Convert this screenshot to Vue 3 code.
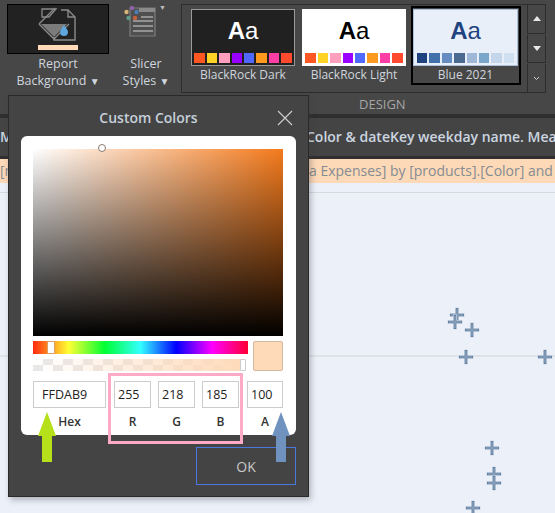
<template>
  <main class="app">
    <header class="ribbon">
      <div class="tools">
        <div class="tool report">
          <div class="report-icon">
            <svg width="40" height="36" viewBox="0 0 40 36" fill="none">
              <path d="M4 2h14l-7 8H4z" stroke="#8a8a8a" stroke-width="1.3" />
              <path d="M1 17 L17 1 M1 17l15 15 15-15" stroke="#8a8a8a" stroke-width="1.4" />
              <path d="M3 17h26L16 30z" fill="#7b7b7b" />
              <path d="M23 3h7l7 7v23H16v-3M30 3v7h7" stroke="#8a8a8a" stroke-width="1.4" />
              <path d="M26 18c2 3 4 5 4 7a4 4 0 0 1-8 0c0-2 2-4 4-7z" fill="#5fa6dc" />
            </svg>
            <span class="color-bar"></span>
          </div>
          <div class="tool-label">Report<br />Background <i class="caret">▼</i></div>
        </div>
        <div class="tool slicer">
          <div class="slicer-icon">
            <svg width="40" height="38" viewBox="0 0 40 38" fill="none">
              <path d="M9 8h25v28H9z" fill="#4f4f4f" stroke="#7d7d7d" stroke-width="1.2" />
              <rect x="18" y="8" width="16" height="4" fill="#8a8a8a" />
              <path d="M12 21h20M12 26h20M12 31h20" stroke="#a8a8a8" stroke-width="1.5" />
              <path d="M20 17h12" stroke="#a8a8a8" stroke-width="1.5" />
              <circle cx="5.5" cy="12" r="2.2" fill="#d9b476" />
              <circle cx="11" cy="8" r="2.2" fill="#8f62a8" />
              <circle cx="15.5" cy="12" r="2.2" fill="#4a7db5" />
              <circle cx="7.5" cy="18" r="2.2" fill="#5a9a87" />
              <circle cx="14" cy="18" r="2.2" fill="#c4603f" />
            </svg>
            <i class="small-caret">▼</i>
          </div>
          <div class="tool-label">Slicer<br />Styles <i class="caret">▼</i></div>
        </div>
      </div>
      <div class="design">
        <div class="themes">
          <div
            v-for="theme in themes"
            :key="theme.name"
            :class="['theme', { selected: theme.selected }]"
          >
            <div class="preview" :class="theme.cls">
              <div class="aa"><b>A</b>a</div>
              <div class="swatches">
                <span v-for="c in theme.colors" :key="c" :style="{ background: c }"></span>
              </div>
            </div>
            <div class="theme-name">{{ theme.name }}</div>
          </div>
          <div class="scroller">
            <button><span class="up"></span></button>
            <button><span class="down"></span></button>
            <button>
              <svg width="7" height="5" viewBox="0 0 7 5" fill="none"><path d="M1 1l2.5 2.5L6 1" stroke="#cfcfcf" /></svg>
            </button>
          </div>
        </div>
        <div class="design-label">DESIGN</div>
      </div>
    </header>

    <div class="title-bar"><span class="lead">Measure by products</span>Color &amp; dateKey weekday name. Measure</div>
    <div class="note-bar"><span class="lead">[measures].[Data</span>a Expenses] by [products].[Color] and [dateKey]</div>

    <section class="canvas">
      <div class="gridline first"></div>
      <div class="gridline second"></div>
      <svg
        v-for="(p, i) in points"
        :key="i"
        class="point"
        :style="{ left: p[0] - 8 + 'px', top: p[1] - 8 + 'px' }"
        width="16"
        height="16"
        viewBox="0 0 16 16"
      >
        <path d="M8 0.5v15M0.5 8h15" stroke="#d2dcea" stroke-width="4" />
        <path d="M8 1v14M1 8h14" stroke="#64809f" stroke-width="2.6" />
        <path d="M8 2v12M2 8h12" stroke="#93a9c4" stroke-width="1" />
      </svg>
    </section>

    <div class="dialog">
      <div class="dialog-head">
        <span>Custom Colors</span>
        <svg class="close" width="16" height="16" viewBox="0 0 16 16" fill="none">
          <path d="M1 1l14 14M15 1L1 15" stroke="#d0d0d0" stroke-width="1.1" />
        </svg>
      </div>
      <div class="picker">
        <div class="sat">
          <span class="sat-handle"></span>
        </div>
        <div class="bars">
          <div class="bar-col">
            <div class="hue"><span class="hue-handle"></span></div>
            <div class="alpha"><span class="alpha-handle"></span></div>
          </div>
          <div class="current"></div>
        </div>
        <div class="fields">
          <label v-for="f in fields" :key="f.label" :class="f.cls">
            <input type="text" :value="f.value" readonly />
            <span>{{ f.label }}</span>
          </label>
        </div>
      </div>
      <div class="actions">
        <button class="ok">OK</button>
      </div>

      <div class="rgb-mark"></div>
      <svg class="arrow green" width="18" height="50" viewBox="0 0 18 50"><path d="M9 0l9 24h-4v26H4V24H0z" fill="#b5e01a" /></svg>
      <svg class="arrow blue" width="18" height="50" viewBox="0 0 18 50"><path d="M9 0l9 24h-4v26H4V24H0z" fill="#6f92bf" /></svg>
    </div>
  </main>
</template>

<script setup>
const themes = [
  {
    name: "BlackRock Dark",
    cls: "dark",
    colors: ["#ff5722", "#ffd426", "#ff9fbd", "#9a00ff", "#5068ff", "#ff9a1f", "#ff3ea5", "#ff4a2e"],
  },
  {
    name: "BlackRock Light",
    cls: "light",
    colors: ["#ff5723", "#ffd427", "#ff9fbe", "#9a01ff", "#5069ff", "#ff9a20", "#ff3ea6", "#ff4a2f"],
  },
  {
    name: "Blue 2021",
    cls: "blue",
    selected: true,
    colors: ["#1f437f", "#4270a8", "#678cc2", "#4c6a90", "#a0b8d8", "#7ba6cc", "#c5d6ea", "#d0e0f0"],
  },
];

const fields = [
  { label: "Hex", value: "FFDAB9", cls: "hex" },
  { label: "R", value: "255", cls: "r" },
  { label: "G", value: "218", cls: "g" },
  { label: "B", value: "185", cls: "b" },
  { label: "A", value: "100", cls: "a" },
];

const points = [
  [457, 315],
  [455, 322],
  [472, 330],
  [466, 357],
  [545, 357],
  [492, 448],
  [494, 474],
  [494, 483],
  [473, 508],
];
</script>

<style>
html,
body {
  margin: 0;
  overflow: hidden;
}
</style>

<style scoped>
.app {
  position: relative;
  width: 555px;
  height: 513px;
  overflow: hidden;
  font-family: "Open Sans", "Noto Sans", sans-serif;
  background: #ecf1f9;
}

.ribbon {
  display: flex;
  height: 114px;
  background: #474747;
  color: #cfd6dd;
  border-bottom: 4px solid #2f2f2f;
}

.tools {
  display: flex;
  width: 181px;
  padding-left: 7px;
  box-sizing: border-box;
}

.tool-label {
  margin-top: 1px;
  font-size: 12.5px;
  line-height: 17px;
  text-align: center;
  white-space: nowrap;
}

.caret {
  font-style: normal;
  font-size: 10px;
}

.report {
  width: 102px;
  padding-top: 4px;
}

.report-icon {
  position: relative;
  height: 50px;
  box-sizing: border-box;
  padding-top: 2px;
  background: #222;
  border: 1px solid #000;
  display: flex;
  flex-direction: column;
  align-items: center;
}

.color-bar {
  display: block;
  width: 40px;
  height: 5px;
  margin-top: 2px;
  background: #ffdab9;
}

.slicer {
  width: 62px;
  margin-left: 6px;
}

.slicer-icon {
  position: relative;
  height: 54px;
  padding-left: 6px;
  box-sizing: border-box;
}

.small-caret {
  position: absolute;
  top: 3px;
  left: 44px;
  font-style: normal;
  font-size: 7px;
  color: #bdbdbd;
}

.design {
  flex: 1;
}

.themes {
  display: flex;
  width: 365px;
  height: 89px;
  margin-top: 4px;
  box-sizing: border-box;
  padding: 1px 0 0 6px;
  border: 1px solid #2d2d2d;
  border-right: 0;
  position: relative;
}

.theme {
  width: 110px;
  height: 79px;
  box-sizing: border-box;
  padding: 3px;
  border: 0 solid transparent;
}

.theme + .theme {
  margin-left: 1px;
}

.theme.selected {
  border: 2px solid #000;
  margin-left: 2px;
  padding: 1px 1px 0 0;
}

.preview {
  height: 57px;
  box-sizing: border-box;
  border: 1px solid #9a9a9a;
  padding-top: 8px;
  overflow: hidden;
}

.preview.dark {
  background: #212121;
  color: #fff;
}

.preview.light {
  background: #fff;
  color: #000;
  border-color: #fff;
}

.preview.blue {
  background: #e9eff8;
  color: #1f437f;
  border-color: #a9bfdc;
}

.aa {
  height: 35px;
  font-family: "Liberation Sans", Arial, sans-serif;
  font-size: 24px;
  line-height: 26px;
  text-align: center;
}

.swatches {
  display: flex;
  justify-content: center;
  gap: 2px;
}

.swatches span {
  width: 10.4px;
  height: 10px;
}

.theme-name {
  margin-top: 1px;
  font-size: 12px;
  line-height: 16px;
  text-align: center;
  white-space: nowrap;
}

.scroller {
  position: absolute;
  top: 0;
  right: 0;
  width: 19px;
  height: 88px;
  display: flex;
  flex-direction: column;
  gap: 1px;
}

.scroller button {
  flex: 1;
  padding: 0;
  background: #474747;
  border: 1px solid #2d2d2d;
  border-top: 0;
  display: flex;
  align-items: center;
  justify-content: center;
}

.up,
.down {
  width: 0;
  height: 0;
  border-left: 4.5px solid transparent;
  border-right: 4.5px solid transparent;
}

.up {
  border-bottom: 5px solid #e8e8e8;
}

.down {
  border-top: 5px solid #e8e8e8;
}

.design-label {
  margin-top: 1px;
  padding-left: 178px;
  font-size: 13px;
  line-height: 20px;
  color: #a5a5a5;
}

.title-bar {
  height: 38px;
  background: #444;
  color: #ccd6e0;
  font-size: 14px;
  font-weight: 600;
  line-height: 38px;
  white-space: nowrap;
  overflow: hidden;
  border-bottom: 3px solid #2f2f2f;
}

.note-bar {
  height: 24px;
  background: #fdd9b8;
  color: #858b92;
  font-size: 14px;
  line-height: 24px;
  white-space: nowrap;
  overflow: hidden;
}

.lead {
  display: inline-block;
  overflow: hidden;
  vertical-align: top;
}

.title-bar .lead {
  width: 306px;
}

.note-bar .lead {
  width: 309px;
}

.canvas {
  position: absolute;
  left: 0;
  top: 0;
  width: 555px;
  height: 513px;
  pointer-events: none;
}

.gridline {
  position: absolute;
  left: 0;
  right: 0;
  height: 1px;
  background: #d6d9dd;
}

.gridline.first {
  top: 192px;
}

.gridline.second {
  top: 355px;
  height: 2px;
  background: #dfe2e7;
}

.point {
  position: absolute;
}

/* dialog floats over the ribbon and the report */
.dialog {
  position: absolute;
  left: 8px;
  top: 95px;
  width: 301px;
  height: 402px;
  box-sizing: border-box;
  padding: 0 12px;
  background: #444;
  border: 1px solid #2a2a2a;
  box-shadow: 2px 3px 6px rgba(60, 60, 70, 0.35);
}

.dialog-head {
  position: relative;
  height: 40px;
  padding-right: 20px;
  text-align: center;
  font-size: 14px;
  font-weight: 600;
  line-height: 44px;
  color: #c5d0da;
}

.close {
  position: absolute;
  top: 14px;
  right: 3px;
}

.picker {
  width: 275px;
  height: 299px;
  box-sizing: border-box;
  padding: 13px 13px 0 12px;
  background: #fff;
  border-radius: 6px;
}

.sat {
  position: relative;
  height: 187px;
  background:
    linear-gradient(to bottom, rgba(0, 0, 0, 0), #000),
    linear-gradient(to right, #fff, #f47a1c);
}

.sat-handle {
  position: absolute;
  left: 65px;
  top: -5px;
  width: 6px;
  height: 6px;
  border: 1px solid #8a7a70;
  border-radius: 50%;
  background: #fff;
}

.bars {
  display: flex;
  justify-content: space-between;
  margin-top: 5px;
}

.bar-col {
  width: 215px;
}

.hue {
  position: relative;
  height: 13px;
  background: linear-gradient(
    to right,
    #ff2a10 0%,
    #ffff33 16.6%,
    #00ff33 33.3%,
    #33ffff 50%,
    #0000ff 66.6%,
    #ff00ff 83.3%,
    #ff0033 100%
  );
}

.hue-handle {
  position: absolute;
  left: 14px;
  top: 0;
  width: 6px;
  height: 11px;
  background: #fff;
  border: 1px solid #d9a066;
  border-radius: 1px;
}

.alpha {
  position: relative;
  width: 212px;
  height: 12px;
  margin-top: 5px;
  background:
    linear-gradient(to right, rgba(255, 218, 185, 0), #ffdab9),
    repeating-conic-gradient(#e8e8e8 0 25%, #fff 0 50%) 0 0 / 20px 12px;
}

.alpha-handle {
  position: absolute;
  right: -1px;
  top: 0;
  width: 4px;
  height: 10px;
  background: #fff;
  border: 1px solid #ccc;
  border-radius: 1px;
}

.current {
  width: 30px;
  height: 30px;
  box-sizing: border-box;
  background: #ffdab9;
  border: 1px solid #d4b89f;
  border-radius: 2px;
}

.fields {
  display: flex;
  gap: 7px;
  margin-top: 10px;
}

.fields label {
  display: flex;
  flex-direction: column;
  align-items: center;
  width: 37px;
  font-size: 12px;
  font-weight: 600;
  color: #333;
}

.fields label.hex {
  width: 73px;
  margin-right: 1px;
}

.fields label.a {
  width: 36px;
  margin-left: 1px;
}

.fields input {
  width: 100%;
  height: 27px;
  box-sizing: border-box;
  padding: 0 3px;
  font-family: inherit;
  font-size: 12.5px;
  color: #222;
  background: #fff;
  border: 1px solid #ccc;
  outline: none;
}

.fields .hex input {
  padding-left: 8px;
}

.fields span {
  margin-top: 6px;
  line-height: 16px;
}

.actions {
  display: flex;
  justify-content: flex-end;
  margin-top: 12px;
}

.ok {
  width: 100px;
  height: 38px;
  background: transparent;
  border: 1px solid #4a78e0;
  color: #c9c9c9;
  font-family: inherit;
  font-size: 14px;
}

.rgb-mark {
  position: absolute;
  left: 99px;
  top: 277px;
  width: 135px;
  height: 71px;
  box-sizing: border-box;
  border: 3px solid #fdaac6;
}

.arrow {
  position: absolute;
  top: 316px;
}

.arrow.green {
  left: 29px;
}

.arrow.blue {
  left: 263px;
}
</style>
